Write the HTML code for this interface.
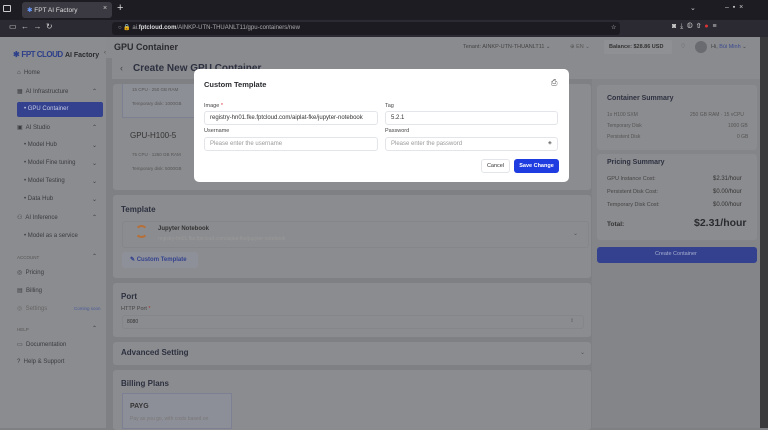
<!DOCTYPE html>
<html><head><meta charset="utf-8"><style>
*{box-sizing:border-box;margin:0;padding:0}
body{width:768px;height:428px;overflow:hidden;background:#7f8083;font-family:"Liberation Sans",sans-serif;position:relative;color:#2a2b30}
.a{position:absolute;white-space:nowrap}
.sb{font-size:6px;color:#3a3b40}
.card{position:absolute;background:#8b8c8f;border-radius:3px}
.in{position:absolute;border:1px solid #e3e5ea;border-radius:3px;background:#fff;font-size:6px;padding:3px 5px;height:14px;color:#333}
</style></head><body>
<!-- browser chrome -->
<div class="a" style="left:0;top:0;width:768px;height:20px;background:#1d1c22"></div>
<div class="a" style="left:3px;top:5px;width:8px;height:7px;border:1px solid #ccc;border-radius:1px"></div>
<div class="a" style="left:22px;top:2px;width:90px;height:16px;background:#3b3a42;border-radius:3px"></div>
<div class="a" style="left:27px;top:6px;font-size:6.5px;color:#ddd"><span style="color:#6a9bff">✱</span> FPT AI Factory</div>
<div class="a" style="left:103px;top:5px;font-size:7px;color:#ccc">×</div>
<div class="a" style="left:117px;top:2px;font-size:11px;color:#ddd">+</div>
<div class="a" style="left:690px;top:4px;font-size:7px;color:#ccc">⌄</div>
<div class="a" style="left:725px;top:4px;font-size:7px;color:#ccc">–&nbsp;&nbsp;▪&nbsp;&nbsp;×</div>
<div class="a" style="left:0;top:20px;width:768px;height:17px;background:#2b2a33"></div>
<div class="a" style="left:9px;top:22px;font-size:8px;color:#ccc">▭&nbsp;&nbsp;←&nbsp;&nbsp;→&nbsp;&nbsp;↻</div>
<div class="a" style="left:112px;top:22px;width:508px;height:13px;background:#1c1b22;border-radius:3px"></div>
<div class="a" style="left:118px;top:24px;font-size:6px;color:#aaa">○ 🔒 ai.<b style="color:#ddd">fptcloud.com</b>/AINKP-UTN-THUANLT11/gpu-containers/new</div>
<div class="a" style="left:611px;top:24px;font-size:6px;color:#ccc">☆</div>
<div class="a" style="left:672px;top:23px;font-size:7px;color:#ccc">◙&nbsp;&nbsp;⤓&nbsp;&nbsp;◍&nbsp;&nbsp;⇧&nbsp;&nbsp;<span style="color:#d33">●</span>&nbsp;&nbsp;≡</div>
<div class="a" style="left:760px;top:37px;width:8px;height:391px;background:#3a3a3c"></div>

<!-- sidebar -->
<div class="a" style="left:0;top:37px;width:106px;height:391px;background:#8b8c8f"></div>
<div class="a" style="left:13px;top:50px;font-size:8px;font-weight:bold;color:#2d3f8a">✱<span style="letter-spacing:-0.5px"> FPT CLOUD</span> <span style="color:#2a2b30;font-size:7px">AI Factory</span></div>
<div class="a" style="left:104px;top:50px;font-size:6px;color:#444">‹</div>
<div class="a sb" style="left:17px;top:70px">⌂&nbsp; Home</div>
<div class="a sb" style="left:17px;top:88px">▦&nbsp; AI Infrastructure</div><div class="a sb" style="left:92px;top:88px">⌃</div>
<div class="a" style="left:17px;top:102px;width:86px;height:15px;background:#33418e;border-radius:2px"></div>
<div class="a" style="left:24px;top:106px;font-size:6px;color:#c9cde6">• GPU Container</div>
<div class="a sb" style="left:17px;top:124px">▣&nbsp; AI Studio</div><div class="a sb" style="left:92px;top:124px">⌃</div>
<div class="a sb" style="left:24px;top:142px">• Model Hub</div><div class="a sb" style="left:92px;top:142px">⌄</div>
<div class="a sb" style="left:24px;top:160px">• Model Fine tuning</div><div class="a sb" style="left:92px;top:160px">⌄</div>
<div class="a sb" style="left:24px;top:178px">• Model Testing</div><div class="a sb" style="left:92px;top:178px">⌄</div>
<div class="a sb" style="left:24px;top:196px">• Data Hub</div><div class="a sb" style="left:92px;top:196px">⌄</div>
<div class="a sb" style="left:17px;top:214px">⚇&nbsp; AI Inference</div><div class="a sb" style="left:92px;top:214px">⌃</div>
<div class="a sb" style="left:24px;top:233px">• Model as a service</div>
<div class="a" style="left:17px;top:255px;font-size:4.5px;color:#555">ACCOUNT</div><div class="a sb" style="left:92px;top:253px">⌃</div>
<div class="a sb" style="left:17px;top:269px">◎&nbsp; Pricing</div>
<div class="a sb" style="left:17px;top:287px">▤&nbsp; Billing</div>
<div class="a sb" style="left:17px;top:305px;color:#666">◎&nbsp; Settings</div>
<div class="a" style="left:74px;top:306px;font-size:4.5px;color:#4a5a9a">Coming soon</div>
<div class="a" style="left:17px;top:327px;font-size:4.5px;color:#555">HELP</div><div class="a sb" style="left:92px;top:325px">⌃</div>
<div class="a sb" style="left:17px;top:341px">▭&nbsp; Documentation</div>
<div class="a sb" style="left:17px;top:359px">?&nbsp; Help &amp; Support</div>

<!-- header -->
<div class="a" style="left:106px;top:37px;width:654px;height:21px;background:#8a8b8e"></div>
<div class="a" style="left:114px;top:42px;font-size:9px;font-weight:bold;color:#2a2b30">GPU Container</div>
<div class="a" style="left:463px;top:44px;font-size:5.5px;color:#444">Tenant: AINKP-UTN-THUANLT11 ⌄</div>
<div class="a" style="left:570px;top:44px;font-size:5.5px;color:#555">⊕ EN ⌄</div>
<div class="a" style="left:604px;top:40px;width:68px;height:14px;background:#8f9093;border-radius:2px"></div>
<div class="a" style="left:609px;top:44px;font-size:5.5px;font-weight:bold;color:#333">Balance: $28.86 USD</div>
<div class="a" style="left:680px;top:42px;font-size:7px;color:#555">♢</div>
<div class="a" style="left:695px;top:41px;width:12px;height:12px;border-radius:50%;background:#6a6b70"></div>
<div class="a" style="left:711px;top:44px;font-size:5.5px;color:#444">Hi, <span style="color:#3a4a90">Bùi Minh</span> ⌄</div>

<!-- subheader -->
<div class="a" style="left:112px;top:58px;width:648px;height:21px;background:#8a8b8e"></div>
<div class="a" style="left:120px;top:63px;font-size:9px;color:#444">‹</div>
<div class="a" style="left:133px;top:63px;font-size:10px;font-weight:bold;color:#2d3040">Create New GPU Container</div>

<!-- left cards -->
<div class="card" style="left:113px;top:84px;width:478px;height:106px"></div>
<div class="a" style="left:122px;top:84px;width:100px;height:34px;background:#8d8f97;border:1px solid #7d8090;border-top:none"></div>
<div class="a" style="left:132px;top:87px;font-size:4.5px;color:#555">15 CPU · 250 GB RAM</div>
<div class="a" style="left:132px;top:101px;font-size:4.5px;color:#555">Temporary disk: 1000GB</div>
<div class="a" style="left:130px;top:131px;font-size:8px;color:#333">GPU-H100-5</div>
<div class="a" style="left:132px;top:152px;font-size:4.5px;color:#555">75 CPU · 1250 GB RAM</div>
<div class="a" style="left:132px;top:166px;font-size:4.5px;color:#555">Temporary disk: 5000GB</div>

<div class="card" style="left:113px;top:195px;width:478px;height:83px"></div>
<div class="a" style="left:121px;top:205px;font-size:8px;font-weight:bold;color:#2d3040">Template</div>
<div class="a" style="left:122px;top:221px;width:467px;height:27px;border:1px solid #858689;border-radius:3px"></div>
<div class="a" style="left:135px;top:225px;width:13px;height:13px;border-radius:50%;border:2px solid #b5703a;border-left-color:transparent;border-right-color:transparent"></div>
<div class="a" style="left:158px;top:226px;font-size:6px;font-weight:bold;color:#333">Jupyter Notebook</div>
<div class="a" style="left:158px;top:236px;font-size:5px;color:#999">registry-hn01.fke.fptcloud.com/aiplat-fke/jupyter-notebook</div>
<div class="a" style="left:573px;top:230px;font-size:6px;color:#555">⌄</div>
<div class="a" style="left:122px;top:252px;width:76px;height:16px;background:#8e9099;border-radius:3px"></div>
<div class="a" style="left:130px;top:256px;font-size:6px;color:#34438e;font-weight:bold">✎ Custom Template</div>

<div class="card" style="left:113px;top:283px;width:478px;height:54px"></div>
<div class="a" style="left:121px;top:292px;font-size:8px;font-weight:bold;color:#2d3040">Port</div>
<div class="a" style="left:121px;top:306px;font-size:5.5px;color:#444">HTTP Port <span style="color:#a33">*</span></div>
<div class="a" style="left:122px;top:315px;width:462px;height:14px;border:1px solid #858689;border-radius:3px"></div>
<div class="a" style="left:127px;top:319px;font-size:5px;color:#333">8080</div>
<div class="a" style="left:570px;top:318px;font-size:5px;color:#666">⇕</div>

<div class="card" style="left:113px;top:342px;width:478px;height:23px"></div>
<div class="a" style="left:121px;top:348px;font-size:8px;font-weight:bold;color:#2d3040">Advanced Setting</div>
<div class="a" style="left:580px;top:349px;font-size:6px;color:#555">⌄</div>

<div class="card" style="left:113px;top:370px;width:478px;height:60px"></div>
<div class="a" style="left:121px;top:379px;font-size:8px;font-weight:bold;color:#2d3040">Billing Plans</div>
<div class="a" style="left:122px;top:393px;width:110px;height:36px;background:#8d8f98;border:1px solid #7d8092"></div>
<div class="a" style="left:130px;top:403px;font-size:7px;font-weight:bold;color:#333">PAYG</div>
<div class="a" style="left:130px;top:416px;font-size:5px;color:#777">Pay as you go, with costs based on</div>

<!-- right panel -->
<div class="a" style="left:592px;top:79px;width:168px;height:349px;background:#848588"></div>
<div class="card" style="left:597px;top:85px;width:160px;height:65px"></div>
<div class="a" style="left:607px;top:95px;font-size:7px;font-weight:bold;color:#2d3040">Container Summary</div>
<div class="a" style="left:607px;top:112px;font-size:5px;color:#555">1x H100 SXM</div><div class="a" style="left:690px;top:112px;font-size:5px;color:#555">250 GB RAM · 15 vCPU</div>
<div class="a" style="left:607px;top:123px;font-size:5px;color:#555">Temporary Disk</div><div class="a" style="left:728px;top:123px;font-size:5px;color:#555">1000 GB</div>
<div class="a" style="left:607px;top:134px;font-size:5px;color:#555">Persistent Disk</div><div class="a" style="left:737px;top:134px;font-size:5px;color:#555">0 GB</div>

<div class="card" style="left:597px;top:154px;width:160px;height:86px"></div>
<div class="a" style="left:607px;top:159px;font-size:7px;font-weight:bold;color:#2d3040">Pricing Summary</div>
<div class="a" style="left:607px;top:176px;font-size:5.5px;color:#444">GPU Instance Cost:</div><div class="a" style="left:713px;top:176px;font-size:6px;color:#333">$2.31/hour</div>
<div class="a" style="left:607px;top:189px;font-size:5.5px;color:#444">Persistent Disk Cost:</div><div class="a" style="left:713px;top:189px;font-size:6px;color:#333">$0.00/hour</div>
<div class="a" style="left:607px;top:202px;font-size:5.5px;color:#444">Temporary Disk Cost:</div><div class="a" style="left:713px;top:202px;font-size:6px;color:#333">$0.00/hour</div>
<div class="a" style="left:607px;top:221px;font-size:6.5px;font-weight:bold;color:#333">Total:</div>
<div class="a" style="left:694px;top:217px;font-size:10.5px;font-weight:bold;color:#2a2b30">$2.31/hour</div>
<div class="a" style="left:597px;top:247px;width:160px;height:16px;background:#33418e;border-radius:3px"></div>
<div class="a" style="left:655px;top:251px;font-size:5.5px;color:#a8aed0">Create Container</div>

<!-- modal -->
<div class="a" style="left:194px;top:69px;width:375px;height:113px;background:#fff;border-radius:5px"></div>
<div class="a" style="left:204px;top:80px;font-size:7.5px;font-weight:bold;color:#2a2b30">Custom Template</div>
<div class="a" style="left:551px;top:78px;font-size:8px;color:#555">⎙</div>
<div class="a" style="left:204px;top:103px;font-size:5.5px;color:#444">Image <span style="color:#d33">*</span></div>
<div class="a" style="left:385px;top:103px;font-size:5.5px;color:#444">Tag</div>
<div class="in" style="left:204px;top:111px;width:174px">registry-hn01.fke.fptcloud.com/aiplat-fke/jupyter-notebook</div>
<div class="in" style="left:385px;top:111px;width:173px">5.2.1</div>
<div class="a" style="left:204px;top:128px;font-size:5.5px;color:#444">Username</div>
<div class="a" style="left:385px;top:128px;font-size:5.5px;color:#444">Password</div>
<div class="in" style="left:204px;top:137px;width:174px;color:#999">Please enter the username</div>
<div class="in" style="left:385px;top:137px;width:173px;color:#999">Please enter the password</div>
<div class="a" style="left:548px;top:140px;font-size:5px;color:#666">◈</div>
<div class="a" style="left:481px;top:159px;width:29px;height:14px;border:1px solid #e3e5ea;border-radius:3px;font-size:5.5px;color:#333;text-align:center;line-height:12px">Cancel</div>
<div class="a" style="left:514px;top:159px;width:45px;height:14px;background:#1f3ce0;border-radius:3px;font-size:5.5px;font-weight:bold;color:#fff;text-align:center;line-height:14px">Save Change</div>
</body></html>
